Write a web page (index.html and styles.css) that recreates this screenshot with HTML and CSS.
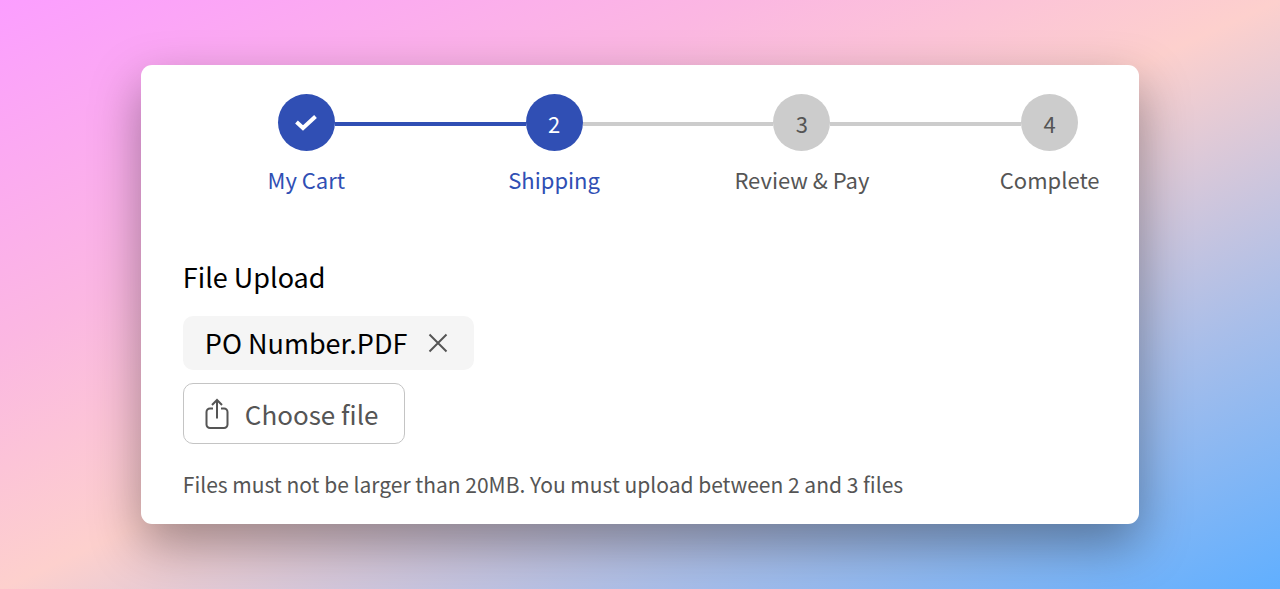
FILE: index.html
```
<!DOCTYPE html>
<html lang="en">
<head>
<meta charset="utf-8">
<meta name="viewport" content="width=device-width, initial-scale=1">
<title>Shipping</title>
<link rel="stylesheet" href="styles.css">
</head>
<body>
<main class="card">
  <ol class="steps">
    <li class="step step-done">
      <div class="step-body">
        <span class="step-marker"><svg class="check" viewBox="0 0 24 18" aria-hidden="true"><path d="M2.500 8 9 14 21.500 2.500"/></svg></span>
        <span class="step-label">My Cart</span>
      </div>
      <span class="step-line"></span>
    </li>
    <li class="step step-current" aria-current="step">
      <div class="step-body">
        <span class="step-marker">2</span>
        <span class="step-label">Shipping</span>
      </div>
      <span class="step-line"></span>
    </li>
    <li class="step">
      <div class="step-body">
        <span class="step-marker">3</span>
        <span class="step-label">Review &amp; Pay</span>
      </div>
      <span class="step-line"></span>
    </li>
    <li class="step">
      <div class="step-body">
        <span class="step-marker">4</span>
        <span class="step-label">Complete</span>
      </div>
    </li>
  </ol>
  <section class="upload">
    <h1 class="upload-title">File Upload</h1>
    <div class="file">
      <span>PO Number.PDF</span>
      <button class="file-remove" type="button" aria-label="Remove PO Number.PDF"><svg viewBox="0 0 20 20" aria-hidden="true"><path d="M1.500 1.500 18.500 18.500M18.500 1.500 1.500 18.500"/></svg></button>
    </div>
    <button class="choose" type="button"><svg class="choose-icon" viewBox="0 0 24 32" aria-hidden="true"><path d="M8 10.500H5A3.500 3.500 0 0 0 1.500 14V26.500A3.500 3.500 0 0 0 5 30H19A3.500 3.500 0 0 0 22.500 26.500V14A3.500 3.500 0 0 0 19 10.500H16M12 20.500V2M7 7 12 2 17 7"/></svg>Choose file</button>
    <p class="hint">Files must not be larger than 20MB. You must upload between 2 and 3 files</p>
  </section>
</main>
</body>
</html>
```
FILE: styles.css
```
* { box-sizing: border-box; }

body {
  margin: 0;
  min-height: 100vh;
  padding: 65px 11%;
  font-family: "Noto Sans CJK SC", "Noto Sans", sans-serif;
  color: #555;
  background: linear-gradient(to bottom right, #fb9eff 0%, #fbb7e2 29%, #fdd0cd 50%, #a9bee9 76%, #60afff 100%);
}

.card {
  padding: 29px 42px 24px;
  border-radius: 11px;
  background: #fff;
  box-shadow: 0 20px 50px rgba(0, 0, 0, .36);
}

.steps {
  display: flex;
  margin: 0;
  padding: 0 19px 0 95px;
  list-style: none;
}

.step { display: flex; flex: 1; }
.step:last-child { flex: none; }

.step-body {
  display: flex;
  flex-direction: column;
  align-items: center;
  gap: 12px;
  width: 57px;
}

.step-marker {
  display: grid;
  place-items: center;
  width: 57px;
  height: 57px;
  border-radius: 50%;
  background: #ccc;
  font-size: 22px;
}

.step-label {
  font-size: 22px;
  line-height: 32px;
  white-space: nowrap;
}

.step-line {
  flex: 1;
  height: 4px;
  margin-top: 28px;
  background: #ccc;
}

.step-done, .step-current { color: #304fb4; }
.step-done .step-marker, .step-current .step-marker { background: #304fb4; color: #fff; }
.step-done .step-line { background: #304fb4; }

svg {
  display: block;
  fill: none;
  stroke: currentColor;
  stroke-width: 2;
}

.check {
  width: 24px;
  height: 18px;
  stroke-width: 4;
}

.upload {
  display: flex;
  flex-direction: column;
  align-items: flex-start;
  margin-top: 64px;
}

.upload-title {
  margin: 0 0 21px;
  color: #000;
  font-size: 27px;
  font-weight: 400;
  line-height: 36px;
}

.file {
  display: flex;
  align-items: center;
  gap: 21px;
  min-height: 54px;
  padding: 0 26px 0 22px;
  border-radius: 10px;
  background: #f5f5f5;
  color: #000;
  font-size: 27px;
  line-height: 36px;
}

.file-remove {
  width: 20px;
  height: 20px;
  padding: 0;
  border: 0;
  background: none;
  color: #555;
}

.choose {
  display: flex;
  align-items: center;
  gap: 16px;
  min-height: 61px;
  margin-top: 13px;
  padding: 0 26px 0 21px;
  border: 1px solid #c4c4c4;
  border-radius: 10px;
  background: #fff;
  color: #555;
  font: inherit;
  font-size: 26px;
  line-height: 36px;
}

.choose-icon { width: 24px; height: 32px; }

.hint {
  margin: 24px 0 0;
  font-size: 21px;
  line-height: 32px;
}
```
